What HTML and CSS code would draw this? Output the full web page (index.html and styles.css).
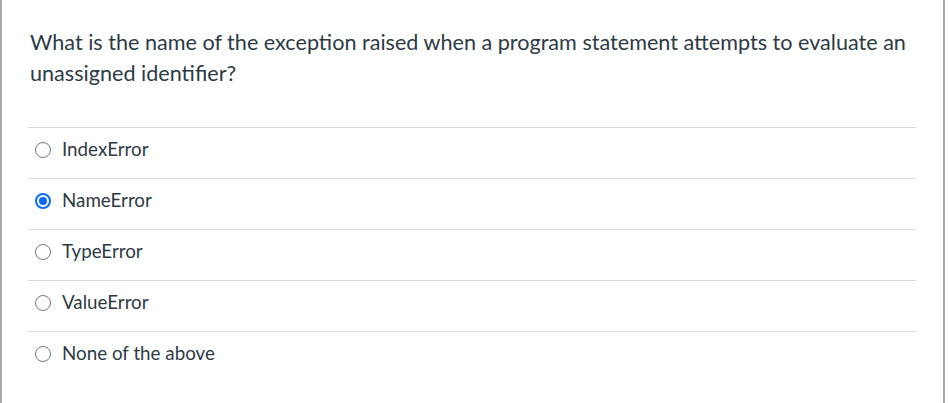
FILE: index.html
```html
<!DOCTYPE html>
<html lang="en">
<head>
<meta charset="utf-8">
<title>Quiz question</title>
<link rel="stylesheet" href="styles.css">
</head>
<body>
<div class="card">
  <div class="question">
    <p class="question-text">What is the name of the exception raised when a program statement attempts to evaluate an unassigned identifier?</p>
    <div class="answers">
      <label class="answer"><span class="radio"></span><span class="answer-text">IndexError</span></label>
      <label class="answer"><span class="radio checked"></span><span class="answer-text">NameError</span></label>
      <label class="answer"><span class="radio"></span><span class="answer-text">TypeError</span></label>
      <label class="answer"><span class="radio"></span><span class="answer-text">ValueError</span></label>
      <label class="answer"><span class="radio"></span><span class="answer-text">None of the above</span></label>
    </div>
  </div>
</div>
</body>
</html>
```
FILE: styles.css
```css
html, body {
  margin: 0;
  padding: 0;
  background: #ffffff;
}
body {
  font-family: Lato, "Open Sans", sans-serif;
  color: #2d3b45;
}
.card {
  width: 941px;
  height: 403px;
  border-left: 2px solid #a8a8a8;
  border-right: 2px solid #a8a8a8;
  box-sizing: content-box;
}
.question {
  padding: 27px 27px 0 26px;
}
.question-text {
  margin: 0 0 0 2px;
  font-size: 21.6px;
  line-height: 31px;
}
.answers {
  margin-top: 38px;
  display: flex;
  flex-direction: column;
}
.answer {
  display: flex;
  align-items: flex-start;
  height: 50px;
  box-sizing: content-box;
  border-top: 1px solid #dcdcdc;
  padding-left: 7px;
  gap: 11px;
  font-size: 18.8px;
}
.answer-text {
  margin-top: 9px;
  line-height: 23px;
}
.radio {
  margin-top: 14px;
  width: 16px;
  height: 16px;
  box-sizing: border-box;
  border: 1.5px solid #767676;
  border-radius: 50%;
  flex: none;
  position: relative;
}
.radio.checked {
  border: 2px solid #0a6cff;
}
.radio.checked::after {
  content: "";
  position: absolute;
  left: 2px;
  top: 2px;
  width: 8px;
  height: 8px;
  border-radius: 50%;
  background: #0a6cff;
}
```
